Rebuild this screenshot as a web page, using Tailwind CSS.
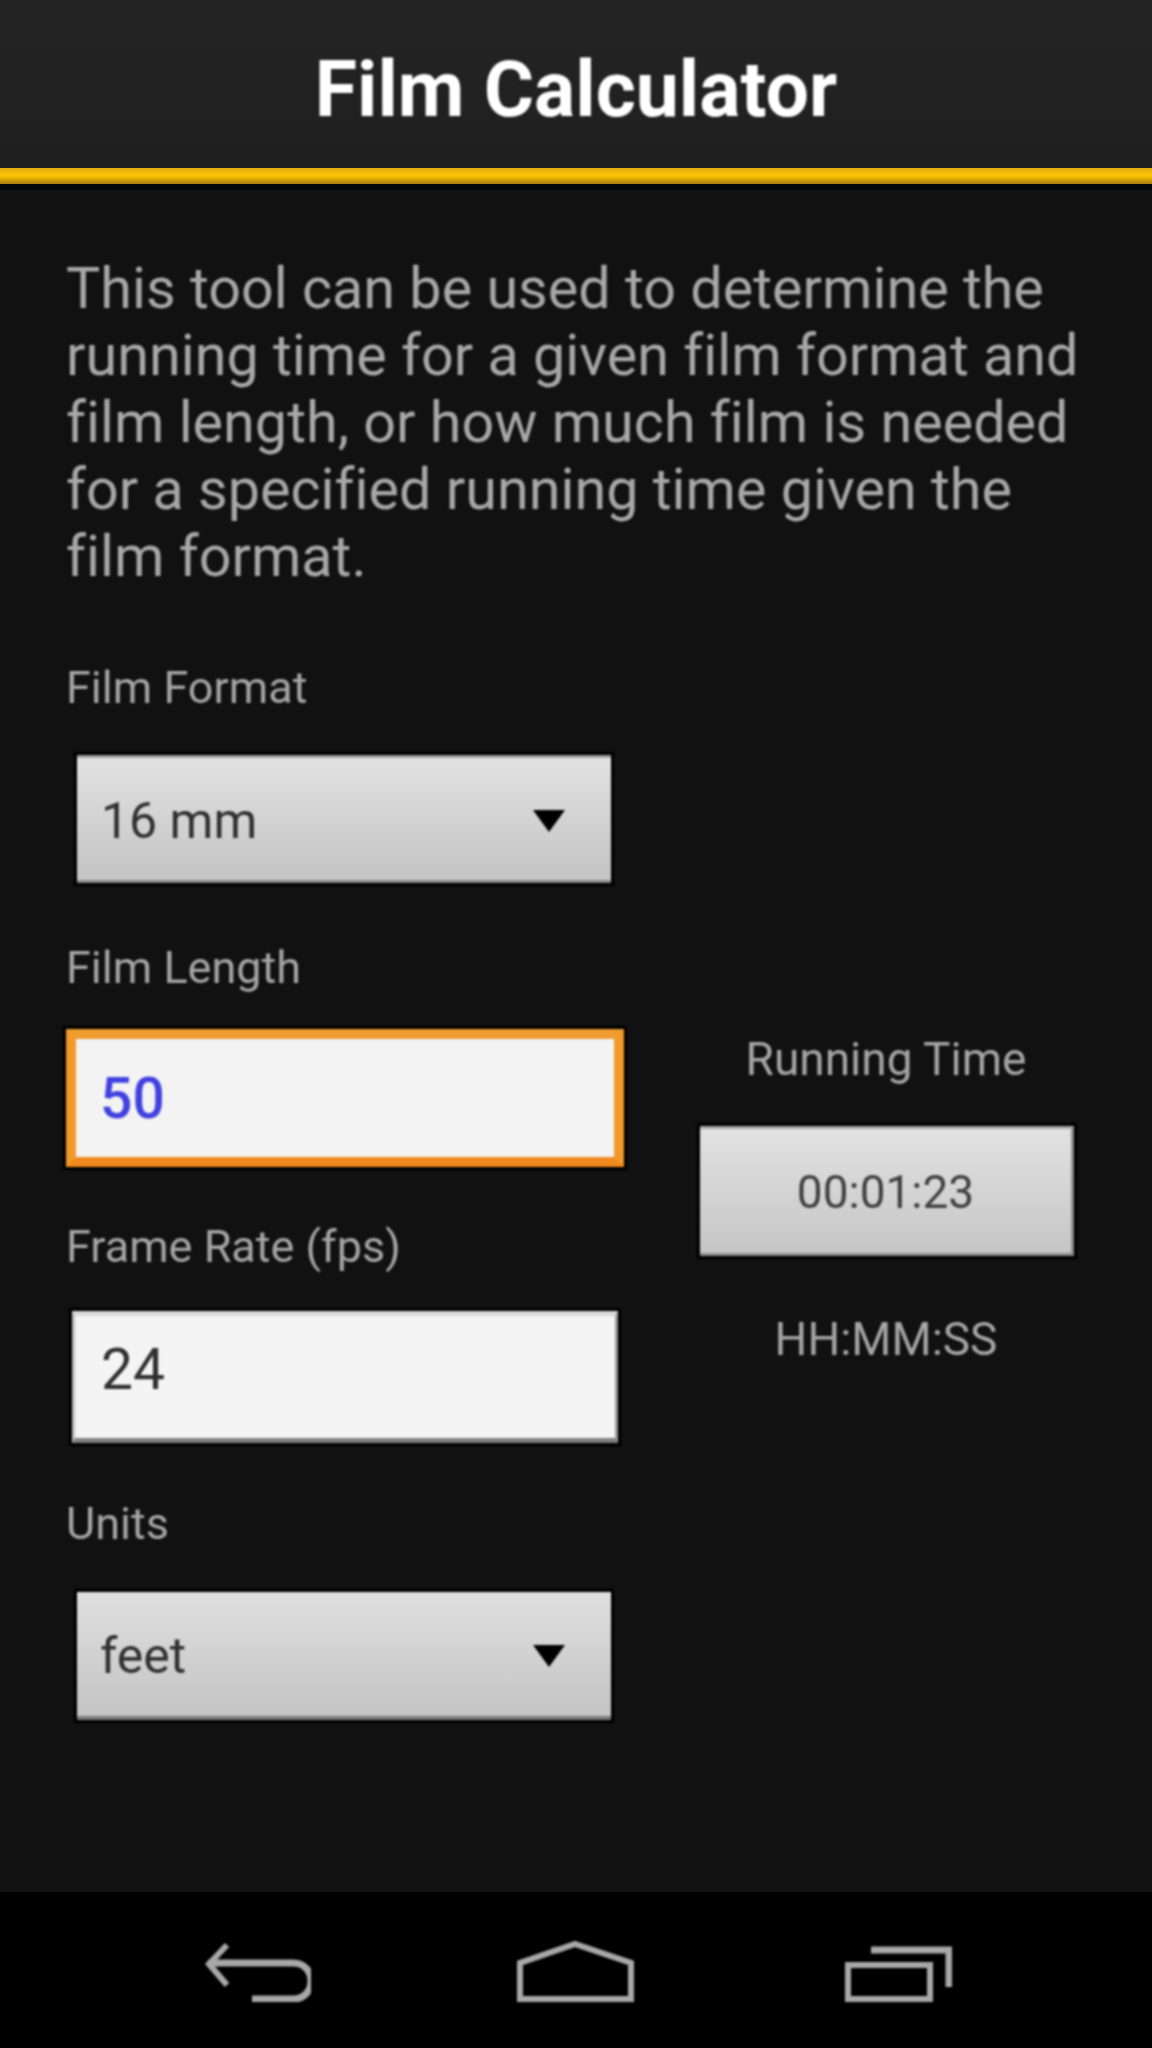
<!DOCTYPE html>
<html lang="en">
<head>
    <meta charset="UTF-8">
    <meta name="viewport" content="width=device-width, initial-scale=1.0">
    <title>Film Calculator</title>
    <script src="https://cdn.jsdelivr.net/npm/@tailwindcss/browser@4"></script>
</head>
<body class="bg-[#111111]">
    <div class="w-[1152px] h-[2048px] flex flex-col overflow-hidden font-['Roboto',sans-serif] text-[45px] leading-[60px] text-[#a6a6a6] [font-variant-ligatures:none]">
        <!-- action bar -->
        <header class="h-[168px] shrink-0 flex items-center justify-center bg-gradient-to-b from-[#242424] to-[#1f1f1f]">
            <h1 class="text-[77px] leading-none font-bold text-white pt-[12px] blur-[1px]">Film Calculator</h1>
        </header>
        <div class="h-[16px] shrink-0 bg-gradient-to-b from-[#e0ad10] via-[#ffc400] to-[#a87c10]"></div>
        <div class="h-[6px] shrink-0 bg-[#05060a]"></div>

        <main class="flex-1 px-[66px] pt-[65px] blur-[1px]">
            <p class="text-[57.5px] leading-[67px] text-[#a8a8a8] whitespace-nowrap">This tool can be used to determine the<br>running time for a given film format and<br>film length, or how much film is needed<br>for a specified running time given the<br>film format.</p>

            <div class="flex items-start mt-[68px]">
                <!-- left column -->
                <div class="w-[558px] shrink-0">
                    <div>Film Format</div>
                    <div class="mt-[37px] ml-[11px] mr-[13px] h-[128px] pl-[24px] pr-[46px] pt-[4px] flex items-center justify-between text-[50px] text-[#303030] bg-gradient-to-b from-[#e2e2e2] to-[#c4c4c4] border-t-[3px] border-t-[#a0a0a0] border-b-[3px] border-b-[#8a8a8a] shadow-[0_0_0_3px_#000]">
                        <span>16 mm</span>
                        <svg width="32" height="22" viewBox="0 0 32 22" class="fill-black"><path d="M0 0H32L16 22Z"/></svg>
                    </div>

                    <div class="mt-[55px]">Film Length</div>
                    <div class="mt-[31px] h-[138px] pl-[24px] pt-[2px] flex items-center text-[57px] font-medium text-[#4141e0] bg-[#f3f3f3] border-[10px] border-t-[#ee9c30] border-x-[#f19a2b] border-b-[#f08a1e] shadow-[0_0_0_3px_#000]">50</div>

                    <div class="mt-[50px]">Frame Rate (fps)</div>
                    <div class="mt-[34px] mx-[6px] h-[132px] pl-[26px] pb-[14px] flex items-center text-[57px] text-[#303030] bg-[#f4f4f4] border-t-[5px] border-t-[#dadada] border-l-[3px] border-l-[#c0c0c0] border-r-[3px] border-r-[#9a9a9a] border-b-[5px] border-b-[#808080] shadow-[0_0_0_3px_#000]">24</div>

                    <div class="mt-[51px]">Units</div>
                    <div class="mt-[38px] ml-[11px] mr-[13px] h-[128px] pl-[23px] pr-[46px] pt-[4px] flex items-center justify-between text-[50px] text-[#303030] bg-gradient-to-b from-[#e0e0e0] to-[#c4c4c4] border-b-[4px] border-b-[#7c7c7c] shadow-[0_0_0_3px_#000]">
                        <span>feet</span>
                        <svg width="32" height="22" viewBox="0 0 32 22" class="fill-black"><path d="M0 0H32L16 22Z"/></svg>
                    </div>
                </div>

                <!-- right column -->
                <div class="ml-[73px] mt-[371px] w-[378px] shrink-0 text-center text-[46px]">
                    <div>Running Time</div>
                    <div class="mt-[37px] ml-[3px] mr-[1px] h-[130px] flex items-center justify-center pt-[2px] text-[#404040] bg-gradient-to-b from-[#e2e2e2] to-[#c6c6c6] border-t-[3px] border-t-[#a8a8a8] border-r-[3px] border-r-[#8c8c8c] border-b-[3px] border-b-[#8a8a8a] shadow-[0_0_0_3px_#000]">00:01:23</div>
                    <div class="mt-[53px]">HH:MM:SS</div>
                </div>
            </div>
        </main>

        <!-- navigation bar -->
        <nav class="h-[156px] shrink-0 bg-black flex items-start pl-[204px] pt-[49px]">
            <svg width="107" height="61" viewBox="0 0 107 61" fill="none" stroke="#a8a8a8" class="shrink-0 blur-[1px]">
                <path d="M23 4L5 23L23 44" stroke-width="6"/>
                <path d="M4 22H89C113 22 113 58 89 58H48" stroke-width="7"/>
            </svg>
            <svg width="117" height="61" viewBox="0 0 117 61" fill="none" stroke="#a8a8a8" stroke-width="6" class="shrink-0 ml-[206px] blur-[1px]">
                <path d="M3 58V22L58 3L114 22V58Z"/>
            </svg>
            <svg width="107" height="56" viewBox="0 0 107 56" fill="none" stroke="#a8a8a8" class="shrink-0 ml-[211px] mt-[5px] blur-[1px]">
                <rect x="3" y="19" width="82" height="34" stroke-width="6"/>
                <path d="M26 4H104V41" stroke-width="7"/>
            </svg>
        </nav>
    </div>
</body>
</html>
